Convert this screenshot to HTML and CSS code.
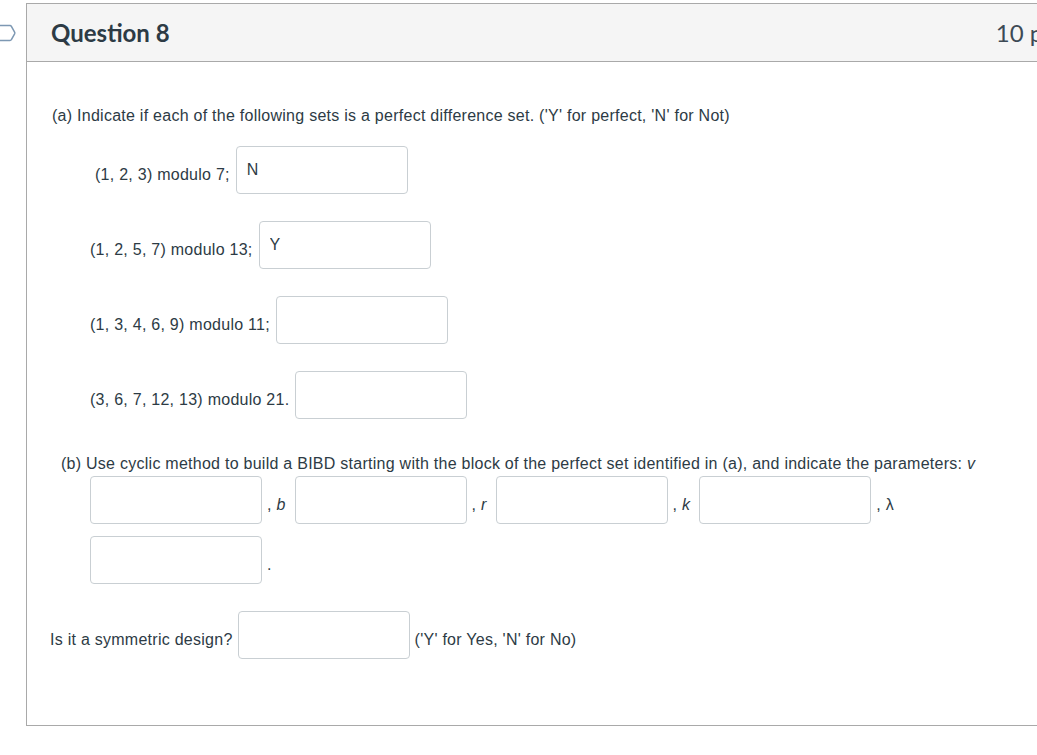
FILE: index.html
```html
<!DOCTYPE html>
<html lang="en">
<head>
<meta charset="utf-8">
<title>Question 8</title>
<link rel="stylesheet" href="styles.css">
</head>
<body>
<div class="page">
  <div class="flag-col">
    <svg class="flag" width="20" height="20" viewBox="0 0 20 20" aria-hidden="true">
      <path d="M-6 1.5 H10 Q10.9 1.5 11.4 2.3 L14.6 8.2 Q15 9 14.6 9.8 L11.4 15.7 Q10.9 16.5 10 16.5 H-6 Z" fill="none" stroke="#7d98b3" stroke-width="1.5" stroke-linejoin="round"/>
    </svg>
  </div>
  <div class="question">
    <div class="q-header">
      <span class="q-title">Question 8</span>
      <span class="q-points">10 pts</span>
    </div>
    <div class="q-body">
      <p class="intro">(a) Indicate if each of the following sets is a perfect difference set. ('Y' for perfect, 'N' for Not)</p>

      <div class="set-row first">
        <span class="lbl">(1, 2, 3) modulo 7;</span>
        <input class="ans" type="text" value="N">
      </div>
      <div class="set-row">
        <span class="lbl">(1, 2, 5, 7) modulo 13;</span>
        <input class="ans" type="text" value="Y">
      </div>
      <div class="set-row">
        <span class="lbl">(1, 3, 4, 6, 9) modulo 11;</span>
        <input class="ans" type="text" value="">
      </div>
      <div class="set-row">
        <span class="lbl">(3, 6, 7, 12, 13) modulo 21.</span>
        <input class="ans" type="text" value="">
      </div>

      <p class="part-b">(b) Use cyclic method to build a BIBD starting with the block of the perfect set identified in (a), and indicate the parameters: <i>v</i></p>

      <div class="params">
        <input class="ans" type="text" value="">
        <span class="sep">, <i>b</i></span>
        <input class="ans" type="text" value="">
        <span class="sep">, <i>r</i></span>
        <input class="ans" type="text" value="">
        <span class="sep">, <i>k</i></span>
        <input class="ans" type="text" value="">
        <span class="sep">, λ</span>
        <input class="ans" type="text" value="">
        <span class="sep">.</span>
      </div>

      <div class="sym-row">
        <span class="lbl">Is it a symmetric design?</span>
        <input class="ans" type="text" value="">
        <span class="lbl">('Y' for Yes, 'N' for No)</span>
      </div>
    </div>
  </div>
</div>
</body>
</html>
```

FILE: styles.css
```css
html, body {
  margin: 0;
  padding: 0;
  background: #ffffff;
  overflow: hidden;
}

.page {
  display: flex;
  align-items: flex-start;
  padding-top: 3px;
  width: 1200px;
}

.flag-col {
  width: 26px;
  flex: 0 0 26px;
  padding-top: 21px;
}

.flag {
  display: block;
}

.question {
  width: 1057px;
  flex: 0 0 auto;
  border: 1px solid #a9a9a9;
  box-sizing: border-box;
  color: #2d3b45;
  font-family: "Liberation Sans", Arial, sans-serif;
  font-size: 16px;
  letter-spacing: 0.26px;
}

.q-header {
  display: flex;
  justify-content: space-between;
  align-items: center;
  height: 57px;
  padding: 0 20px 0 24px;
  background: #f5f5f5;
  border-bottom: 1px solid #a9a9a9;
  font-family: Lato, "Open Sans", sans-serif;
  letter-spacing: 0;
}

.q-title {
  font-size: 24px;
  font-weight: 700;
  color: #2d3b45;
}

.q-points {
  font-size: 24px;
  font-weight: 400;
  color: #3d4a55;
}

.q-body {
  padding: 44px 0 66px 25px;
}

.intro,
.part-b {
  margin: 0;
  line-height: 20px;
}

.part-b {
  margin-top: 35px;
  padding-left: 9px;
}

.set-row {
  display: flex;
  align-items: center;
  gap: 6px;
  margin-top: 27px;
  padding-left: 38px;
}

.set-row.first {
  margin-top: 20px;
  padding-left: 43px;
}

.lbl,
.sep {
  line-height: 20px;
  padding-top: 10px;
  white-space: nowrap;
}

.ans {
  box-sizing: border-box;
  width: 172px;
  height: 48px;
  margin: 0;
  padding: 0 10px;
  border: 1px solid #c9cfd3;
  border-radius: 4px;
  background: #ffffff;
  color: #2d3b45;
  font-family: "Liberation Sans", Arial, sans-serif;
  font-size: 16px;
  outline: none;
}

.params {
  display: flex;
  flex-wrap: wrap;
  align-items: center;
  row-gap: 12px;
  margin-top: 2px;
  padding-left: 38px;
  width: 840px;
}

.sep {
  padding-left: 5px;
  padding-right: 9px;
}

.sym-row {
  display: flex;
  align-items: center;
  gap: 5px;
  margin-top: 27px;
  margin-left: -2px;
}
```
